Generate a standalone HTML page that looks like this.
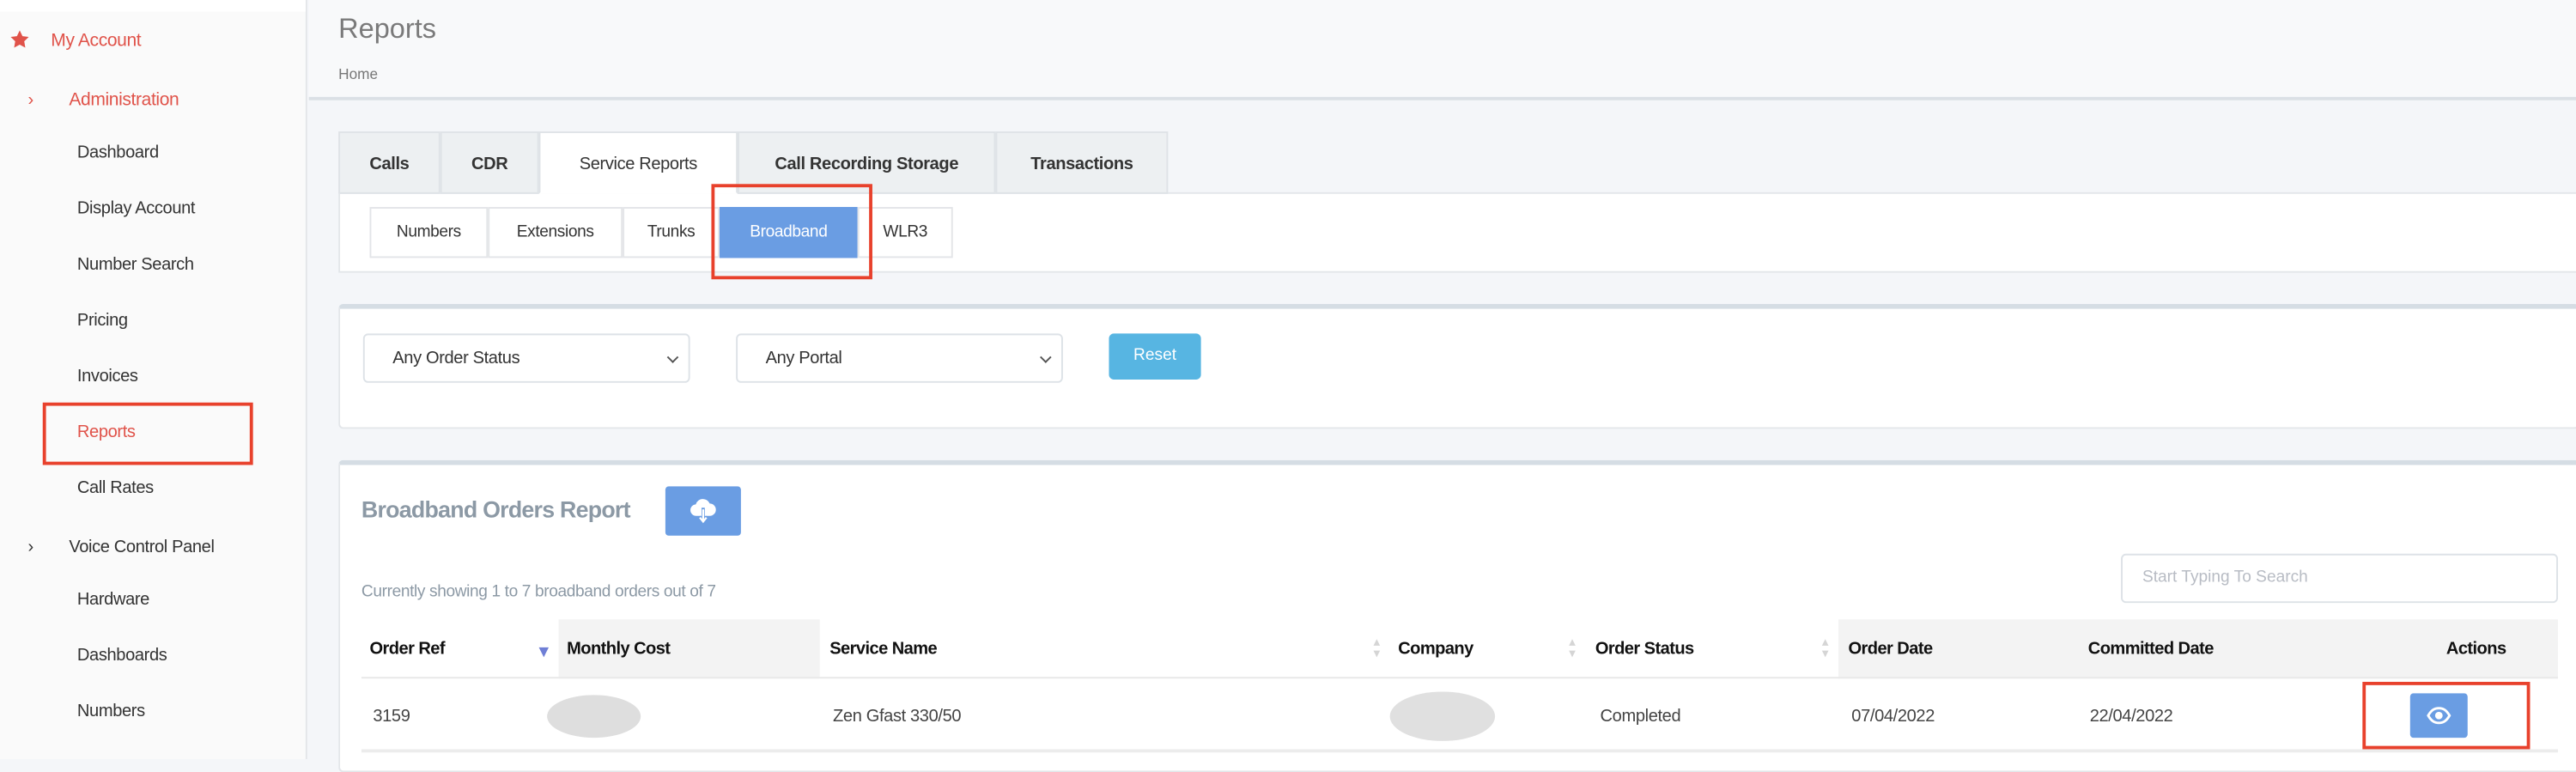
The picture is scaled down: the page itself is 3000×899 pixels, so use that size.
<!DOCTYPE html>
<html><head><meta charset="utf-8"><style>
*{box-sizing:border-box;margin:0;padding:0}
html,body{width:3000px;height:883px;overflow:hidden;background:#f4f6f9;font-family:"Liberation Sans",sans-serif}
#w{position:absolute;left:0;top:0;width:1568px;height:462px;transform:scale(1.9133);transform-origin:0 0}
.a{position:absolute;white-space:nowrap}
.side{position:absolute;left:0;top:0;width:187px;height:462px;background:#fafafa;border-right:1px solid #e3e5e8}
.si{position:absolute;left:47px;font-size:10.5px;color:#333;line-height:14px;letter-spacing:-0.2px}
.red{color:#e0534a}
.tab{position:absolute;top:80px;height:38px;background:#edf0f2;border:1px solid #dfe3e7;font-size:10.5px;font-weight:bold;color:#333;text-align:center;line-height:38px;letter-spacing:-0.2px}
.st{position:absolute;top:126px;height:31px;border:1px solid #e3e5e8;background:#fff;font-size:10px;color:#333;text-align:center;line-height:30px;letter-spacing:-0.2px}
.panel{position:absolute;left:206px;right:-2px;background:#fff;border:1px solid #e3e6ea;border-top:3px solid #d5dde4;border-radius:3px}
.sel{position:absolute;top:203px;height:30px;width:199px;border:1px solid #dde2e7;border-radius:3px;background:#fff;font-size:10.5px;color:#333;line-height:28px;padding-left:17px;letter-spacing:-0.2px}
.sel:after{content:"";position:absolute;right:7px;top:11px;width:4px;height:4px;border-right:1px solid #555;border-bottom:1px solid #555;transform:rotate(45deg)}
.th{position:absolute;top:389px;font-size:10.5px;font-weight:bold;color:#111;letter-spacing:-0.3px}
.td{position:absolute;top:430px;font-size:10.5px;color:#444;letter-spacing:-0.2px}
.sa{position:absolute;top:389px;width:5px;height:12px}
.sa:before{content:"";position:absolute;left:0;top:0;border:2.5px solid transparent;border-bottom:4px solid #d5d5d5;border-top:0}
.sa:after{content:"";position:absolute;left:0;top:7px;border:2.5px solid transparent;border-top:4px solid #d5d5d5;border-bottom:0}
</style></head><body><div id="w">
<div class="side">
<div style="position:absolute;left:0;top:0;width:186px;height:7px;background:#fff"></div>
<svg class="a" style="left:6px;top:18px" width="12" height="12" viewBox="0 0 24 24"><path d="M12 1l3.4 7 7.6 1-5.5 5.3 1.3 7.7L12 18.4 5.2 22l1.3-7.7L1 9l7.6-1z" fill="#e0534a"/></svg>
<div class="si red" style="left:31px;top:18px;font-size:11px">My Account</div>
<div class="si red" style="left:17px;top:54px">›</div>
<div class="si red" style="left:42px;top:54px;font-size:11px">Administration</div>
<div class="si" style="top:86px">Dashboard</div>
<div class="si" style="top:120px">Display Account</div>
<div class="si" style="top:154px">Number Search</div>
<div class="si" style="top:188px">Pricing</div>
<div class="si" style="top:222px">Invoices</div>
<div class="si red" style="top:256px">Reports</div>
<div class="a" style="left:26px;top:245px;width:128px;height:38px;border:2px solid #e8412c"></div>
<div class="si" style="top:290px">Call Rates</div>
<div class="si" style="left:17px;top:326px">›</div>
<div class="si" style="left:42px;top:326px">Voice Control Panel</div>
<div class="si" style="top:358px">Hardware</div>
<div class="si" style="top:392px">Dashboards</div>
<div class="si" style="top:426px">Numbers</div>
</div>
<div class="a" style="left:188px;top:0;width:1380px;height:61px;background:#f8f9fa;border-bottom:2px solid #dbe0e5"></div>
<div class="a" style="left:206px;top:8px;font-size:17px;color:#7a7a7a">Reports</div>
<div class="a" style="left:206px;top:40px;font-size:9px;color:#777">Home</div>
<div class="a" style="left:206px;top:117px;width:1364px;height:49px;background:#fff;border:1px solid #e3e6ea"></div>
<div class="tab" style="left:206px;width:62px">Calls</div>
<div class="tab" style="left:268px;width:60px">CDR</div>
<div class="tab" style="left:328px;width:121px;background:#fff;border-bottom-color:#fff;font-weight:normal">Service Reports</div>
<div class="tab" style="left:449px;width:157px">Call Recording Storage</div>
<div class="tab" style="left:606px;width:105px">Transactions</div>
<div class="st" style="left:225px;width:72px">Numbers</div>
<div class="st" style="left:297px;width:82px">Extensions</div>
<div class="st" style="left:379px;width:59px">Trunks</div>
<div class="st" style="left:438px;width:84px;background:#6a9de3;color:#fff;border-color:#6a9de3">Broadband</div>
<div class="st" style="left:522px;width:58px">WLR3</div>
<div class="a" style="left:433px;top:112px;width:98px;height:58px;border:2px solid #e8412c"></div>
<div class="panel" style="top:185px;height:76px"></div>
<div class="sel" style="left:221px">Any Order Status</div>
<div class="sel" style="left:448px">Any Portal</div>
<div class="a" style="left:675px;top:203px;width:56px;height:28px;background:#57b5e2;border-radius:3px;color:#fff;font-size:10px;text-align:center;line-height:28px">Reset</div>
<div class="panel" style="top:280px;height:190px"></div>
<div class="a" style="left:220px;top:302px;font-size:14px;font-weight:bold;color:#8c99a5;letter-spacing:-0.4px">Broadband Orders Report</div>
<div class="a" style="left:405px;top:296px;width:46px;height:30px;background:#6a9de3;border-radius:2px"></div>
<svg class="a" style="left:420px;top:302px" width="16" height="18" viewBox="0 0 16 18"><path d="M4 12a3.5 3.5 0 0 1-.5-7A4.5 4.5 0 0 1 12 4.5a3.5 3.5 0 0 1 0 7.5z" fill="#fff"/><path d="M8 7v8M5.5 12.5L8 15.5l2.5-3" stroke="#6a9de3" stroke-width="2" fill="none"/><path d="M8 8v7M6 13l2 2.5 2-2.5" stroke="#fff" stroke-width="1.2" fill="none"/></svg>
<div class="a" style="left:220px;top:355px;font-size:10px;color:#8c99a5;letter-spacing:-0.2px">Currently showing 1 to 7 broadband orders out of 7</div>
<div class="a" style="left:1291px;top:337px;width:266px;height:30px;border:1px solid #dde2e7;border-radius:3px;background:#fff;font-size:10px;color:#b8bcc4;line-height:28px;padding-left:12px">Start Typing To Search</div>
<div class="a" style="left:340px;top:377px;width:159px;height:36px;background:#f3f3f3"></div>
<div class="a" style="left:1119px;top:377px;width:438px;height:36px;background:#f3f3f3"></div>
<div class="a" style="left:220px;top:412px;width:1337px;height:1px;background:#e8e8e8"></div>
<div class="a" style="left:220px;top:456px;width:1337px;height:2px;background:#ececec"></div>
<div class="th" style="left:225px">Order Ref</div>
<div class="a" style="left:328px;top:394px;border:3.5px solid transparent;border-top:6px solid #6f7fd6;border-bottom:0"></div>
<div class="th" style="left:345px">Monthly Cost</div>
<div class="th" style="left:505px">Service Name</div>
<div class="sa" style="left:836px"></div>
<div class="th" style="left:851px">Company</div>
<div class="sa" style="left:955px"></div>
<div class="th" style="left:971px">Order Status</div>
<div class="sa" style="left:1109px"></div>
<div class="th" style="left:1125px">Order Date</div>
<div class="th" style="left:1271px">Committed Date</div>
<div class="th" style="left:1489px">Actions</div>
<div class="td" style="left:227px">3159</div>
<div class="a" style="left:333px;top:423px;width:57px;height:26px;border-radius:50%;background:#dedede"></div>
<div class="td" style="left:507px">Zen Gfast 330/50</div>
<div class="a" style="left:846px;top:421px;width:64px;height:30px;border-radius:50%;background:#e0e0e0"></div>
<div class="td" style="left:974px">Completed</div>
<div class="td" style="left:1127px">07/04/2022</div>
<div class="td" style="left:1272px">22/04/2022</div>
<div class="a" style="left:1467px;top:422px;width:35px;height:27px;background:#6a9de3;border-radius:2px"></div>
<svg class="a" style="left:1477px;top:429px" width="15" height="13" viewBox="0 0 15 13"><path d="M1 6.5C3 3 5 2 7.5 2S12 3 14 6.5C12 10 10 11 7.5 11S3 10 1 6.5z" fill="none" stroke="#fff" stroke-width="1.5"/><circle cx="7.5" cy="6.5" r="2.3" fill="#fff"/></svg>
<div class="a" style="left:1438px;top:415px;width:102px;height:41px;border:2px solid #e8412c"></div>
</div></body></html>
